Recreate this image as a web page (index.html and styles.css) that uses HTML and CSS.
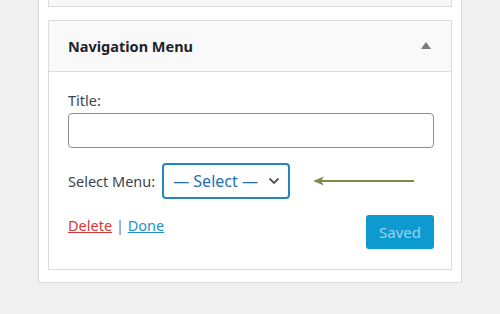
FILE: index.html
```html
<!DOCTYPE html>
<html>
<head>
<meta charset="utf-8">
<link rel="stylesheet" href="styles.css">
</head>
<body>
<div class="sidebar">
  <div class="prev-widget"></div>
  <div class="widget">
    <div class="widget-top">
      <h3 class="widget-title">Navigation Menu</h3>
      <span class="toggle"></span>
    </div>
    <div class="widget-inside">
      <label class="field-label">Title:</label>
      <input class="text-input" type="text">
      <div class="select-row">
        <span class="select-label">Select Menu:</span>
        <div class="select-box">
          <span class="select-text">— Select —</span>
          <svg class="chev" width="12" height="8" viewBox="0 0 12 8"><path d="M1.5 1.5 L6 6 L10.5 1.5" fill="none" stroke="#50575e" stroke-width="1.8"/></svg>
        </div>
        <svg class="arrow" width="102" height="12" viewBox="0 0 102 12"><path d="M2 6 H101" stroke="#7a8b4b" stroke-width="2"/><path d="M0 6 L11 1.5 L8 6 L11 10.5 Z" fill="#7a8b4b"/></svg>
      </div>
      <div class="actions">
        <div class="links"><a class="delete" href="#">Delete</a> <span class="sep">|</span> <a class="done" href="#">Done</a></div>
        <button class="saved">Saved</button>
      </div>
    </div>
  </div>
</div>
</body>
</html>
```
FILE: styles.css
```css
html, body {
  margin: 0;
  padding: 0;
  background: #f0f0f1;
  font-family: "Noto Sans", "Open Sans", sans-serif;
}
.sidebar {
  margin-left: 38px;
  width: 404px;
  padding: 0 9px 12px 9px;
  background: #fff;
  border: 1px solid #dcdcde;
  border-top: none;
}
.prev-widget {
  height: 6px;
  background: #f8f8f8;
  border: 1px solid #dcdcde;
  border-top: none;
}
.widget {
  margin-top: 13px;
  border: 1px solid #dcdcde;
  background: #fff;
}
.widget-top {
  height: 50px;
  background: #f9f9f9;
  border-bottom: 1px solid #dcdcde;
  display: flex;
  align-items: center;
  padding: 0 20px 0 19px;
}
.widget-title {
  margin: 0;
  flex: 1;
  font-size: 14.5px;
  font-weight: 700;
  color: #1d2327;
}
.toggle {
  width: 0;
  height: 0;
  border-left: 5px solid transparent;
  border-right: 5px solid transparent;
  border-bottom: 7px solid #787c82;
  margin-top: -2px;
}
.widget-inside {
  padding: 18px 17px 20px 19px;
  display: flex;
  flex-direction: column;
}
.field-label {
  font-size: 14.5px;
  line-height: 20px;
  color: #3c434a;
}
.text-input {
  margin: 3px 0 0 0;
  height: 35px;
  box-sizing: border-box;
  width: 100%;
  border: 1px solid #8c8f94;
  border-radius: 4px;
  background: #fff;
}
.select-row {
  margin-top: 15px;
  display: flex;
  align-items: center;
  height: 36px;
}
.select-label {
  font-size: 14.5px;
  color: #3c434a;
}
.select-box {
  margin-left: 7px;
  width: 128px;
  height: 36px;
  box-sizing: border-box;
  border: 2px solid #2584c6;
  border-radius: 4px;
  display: flex;
  align-items: center;
  padding: 0 8px 0 9px;
}
.select-text {
  flex: 1;
  font-size: 16px;
  color: #2271b1;
}
.chev {
  display: block;
}
.arrow {
  margin-left: 23px;
  display: block;
}
.actions {
  margin-top: 16px;
  display: flex;
  justify-content: space-between;
  align-items: flex-start;
}
.links {
  font-size: 14.5px;
  line-height: 20px;
  color: #787c82;
}
.delete {
  color: #d63638;
}
.done {
  color: #2590c9;
}
.saved {
  width: 68px;
  height: 34px;
  border: none;
  border-radius: 3px;
  background: #0c9ad0;
  color: #9ed3ec;
  font-family: "Noto Sans", "Open Sans", sans-serif;
  font-size: 15px;
  padding: 0;
}
```
